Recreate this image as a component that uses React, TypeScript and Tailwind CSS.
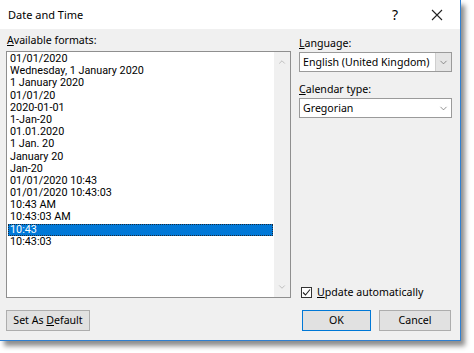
import { ChevronDown, ChevronUp } from "lucide-react";

const formats = [
  "01/01/2020",
  "Wednesday, 1 January 2020",
  "1 January 2020",
  "01/01/20",
  "2020-01-01",
  "1-Jan-20",
  "01.01.2020",
  "1 Jan. 20",
  "January 20",
  "Jan-20",
  "01/01/2020 10:43",
  "01/01/2020 10:43:03",
  "10:43 AM",
  "10:43:03 AM",
  "10:43",
  "10:43:03",
];

function Combo({ value, boxed }: { value: string; boxed?: boolean }) {
  return (
    <div className="h-[20px] bg-white border border-[#9a9a9a] flex items-center">
      <span className="flex-1 pl-[3px] text-[10.6px] leading-[13px] text-black whitespace-nowrap overflow-hidden">
        {value}
      </span>
      <div
        className={
          "w-[16px] h-[18px] flex items-center justify-center " +
          (boxed ? "bg-[#e5e5e5] border-l border-[#cfcfcf]" : "")
        }
      >
        <ChevronDown size={11} strokeWidth={1.5} className="text-[#606060]" />
      </div>
    </div>
  );
}

export default function App() {
  const selected = 14;

  return (
    <div className="w-[474px] h-[353px] bg-white relative font-['Noto_Sans',sans-serif] text-black">
      <div className="w-[461px] h-[341px] flex flex-col border-r border-b border-[#2f7fd0] shadow-[4px_5px_5px_rgba(0,0,0,0.45)]">
        {/* title bar */}
        <div className="h-[29px] bg-white flex items-center">
          <span className="pl-[8px] text-[11px] leading-[14px]">Date and Time</span>
          <span className="ml-auto mr-[33px] text-[14px] leading-[14px]">?</span>
          <svg width="12" height="12" viewBox="0 0 12 12" className="mr-[17px]">
            <path d="M1 1 L11 11 M11 1 L1 11" stroke="#222" strokeWidth="1.1" fill="none" />
          </svg>
        </div>

        {/* body */}
        <div className="flex-1 bg-[#f0f0f0] flex pl-[6px] text-[10.6px]">
          {/* left */}
          <div className="w-[285px] flex flex-col">
            <div className="h-[22px] flex items-end pb-[4px] pl-[1px] leading-[13px]">
              <span>
                <span className="underline">A</span>vailable formats:
              </span>
            </div>
            <div className="h-[247px] bg-white border border-[#8f8f8f] flex">
              <div className="flex-1 pt-[1px] px-[1px] font-['Roboto',sans-serif] text-[10.8px]">
                {formats.map((f, i) => (
                  <div
                    key={f}
                    className={
                      "h-[12.2px] leading-[12.2px] pl-[2px] whitespace-nowrap " +
                      (i === selected
                        ? "bg-[#0078d7] text-white outline-1 outline-dotted outline-[#1c2a3a] -outline-offset-1"
                        : "")
                    }
                  >
                    {f}
                  </div>
                ))}
              </div>
              <div className="w-[16px] bg-[#f0f0f0] flex flex-col items-center justify-between py-[5px]">
                <ChevronUp size={10} strokeWidth={1.6} className="text-[#a6a6a6]" />
                <ChevronDown size={10} strokeWidth={1.6} className="text-[#a6a6a6]" />
              </div>
            </div>
            <div className="mt-[12px] w-[84px] h-[21px] bg-[#e1e1e1] border border-[#adadad] flex items-center justify-center leading-[13px]">
              <span>
                Set As <span className="underline">D</span>efault
              </span>
            </div>
          </div>

          {/* right */}
          <div className="ml-[8px] w-[153px] flex flex-col">
            <div className="h-[23px] flex items-end pb-[2px] leading-[13px]">
              <span>
                <span className="underline">L</span>anguage:
              </span>
            </div>
            <Combo value="English (United Kingdom)" boxed />
            <div className="h-[26px] flex items-end pb-[2px] leading-[13px]">
              <span>
                <span className="underline">C</span>alendar type:
              </span>
            </div>
            <Combo value="Gregorian" />

            <div className="mt-auto flex items-center h-[14px] pl-[2px] gap-[5px] leading-[13px]">
              <div className="w-[11px] h-[11px] border border-[#333] bg-white flex items-center justify-center">
                <svg width="9" height="9" viewBox="0 0 9 9">
                  <path d="M1 4.5 L3.5 7 L8 1.5" stroke="#222" strokeWidth="1.1" fill="none" />
                </svg>
              </div>
              <span>
                <span className="underline">U</span>pdate automatically
              </span>
            </div>
            <div className="mt-[11px] mb-[9px] flex gap-[8px] pl-[3px] h-[21px]">
              <div className="w-[69px] h-[21px] bg-[#e1e1e1] border border-[#0078d7] flex items-center justify-center">
                OK
              </div>
              <div className="w-[72px] h-[21px] bg-[#e1e1e1] border border-[#adadad] flex items-center justify-center">
                Cancel
              </div>
            </div>
          </div>
        </div>
      </div>
    </div>
  );
}
